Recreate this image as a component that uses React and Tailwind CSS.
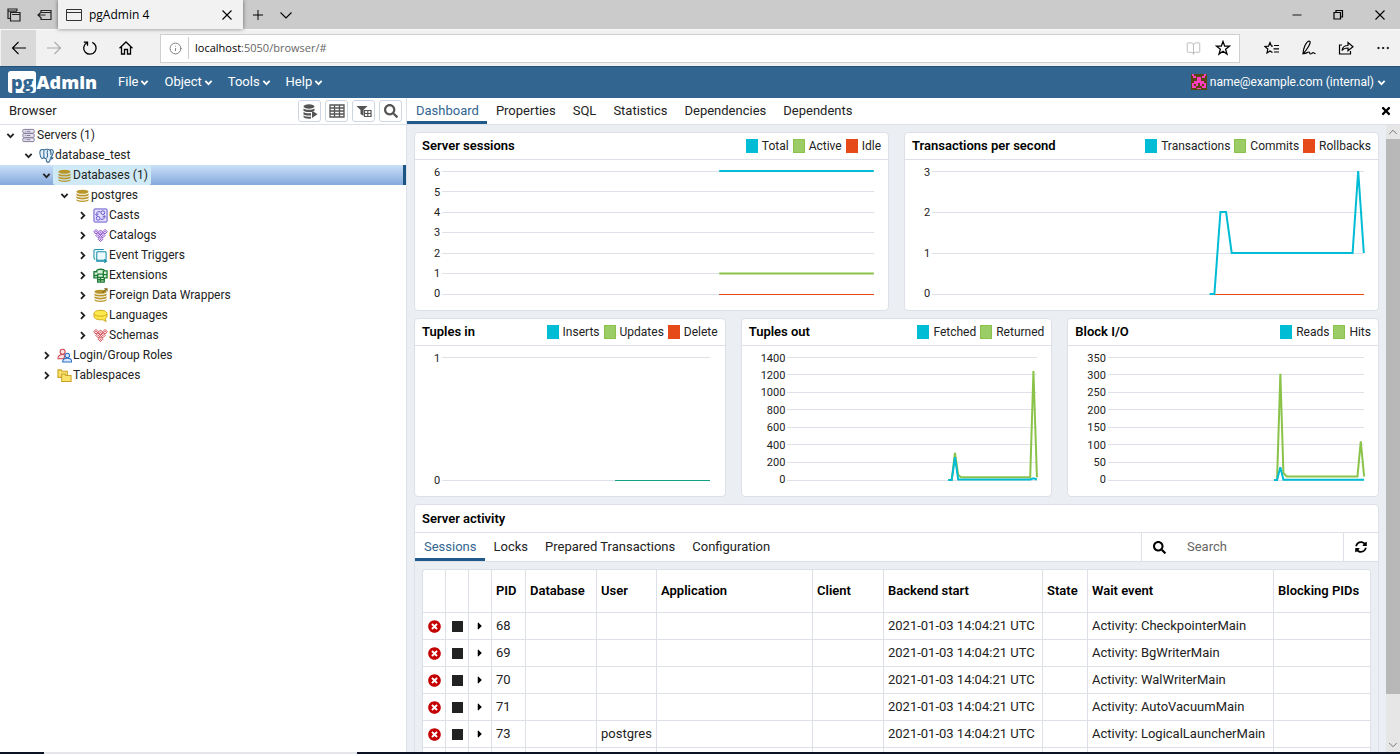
import { Info, BookOpen, Ellipsis, Plus, ChevronDown, ChevronUp, Minus } from 'lucide-react';
import { FaSearch, FaSyncAlt, FaTimes, FaTimesCircle, FaSquareFull, FaCaretRight } from 'react-icons/fa';

const BLUE = '#00bcd4';
const GREEN = '#8bc34a';
const RED = '#e64a19';

const treeRows = [
  { label: 'Servers (1)', depth: 0, icon: 'servers', open: true },
  { label: 'database_test', depth: 1, icon: 'elephant', open: true },
  { label: 'Databases (1)', depth: 2, icon: 'database', open: true, selected: true },
  { label: 'postgres', depth: 3, icon: 'database', open: true },
  { label: 'Casts', depth: 4, icon: 'casts' },
  { label: 'Catalogs', depth: 4, icon: 'catalogs' },
  { label: 'Event Triggers', depth: 4, icon: 'triggers' },
  { label: 'Extensions', depth: 4, icon: 'extensions' },
  { label: 'Foreign Data Wrappers', depth: 4, icon: 'fdw' },
  { label: 'Languages', depth: 4, icon: 'languages' },
  { label: 'Schemas', depth: 4, icon: 'schemas' },
  { label: 'Login/Group Roles', depth: 2, icon: 'roles' },
  { label: 'Tablespaces', depth: 2, icon: 'tablespaces' },
];

const indents = ['pl-[6px]', 'pl-[24px]', 'pl-[42px]', 'pl-[60px]', 'pl-[78px]'];

// x is a percentage of the plot width, y is the value
const charts = {
  sessions: {
    title: 'Server sessions',
    ticks: [6, 5, 4, 3, 2, 1, 0],
    legend: [['Total', BLUE], ['Active', GREEN], ['Idle', RED]],
    series: [
      { color: BLUE, width: 2, points: [[64.2, 6], [100, 6]] },
      { color: GREEN, width: 2, points: [[64.2, 1], [100, 1]] },
      { color: RED, width: 1, points: [[64.2, 0], [100, 0]] },
    ],
  },
  transactions: {
    title: 'Transactions per second',
    ticks: [3, 2, 1, 0],
    legend: [['Transactions', BLUE], ['Commits', GREEN], ['Rollbacks', RED]],
    series: [
      { color: RED, width: 1, points: [[64.3, 0], [100, 0]] },
      { color: BLUE, width: 2, points: [[64.3, 0], [65.4, 0], [66.8, 2], [68.1, 2], [69.4, 1], [97.4, 1], [98.7, 3], [100, 1]] },
    ],
  },
  tuplesIn: {
    title: 'Tuples in',
    ticks: [1, 0],
    legend: [['Inserts', BLUE], ['Updates', GREEN], ['Delete', RED]],
    series: [{ color: '#14a085', width: 1, points: [[64.3, 0], [100, 0]] }],
  },
  tuplesOut: {
    title: 'Tuples out',
    ticks: [1400, 1200, 1000, 800, 600, 400, 200, 0],
    legend: [['Fetched', BLUE], ['Returned', GREEN]],
    series: [
      { color: GREEN, width: 2, points: [[64.5, 0], [65.9, 0], [67.2, 310], [68.5, 55], [69.7, 30], [97.3, 30], [98.6, 1240], [100, 30]] },
      { color: BLUE, width: 2, points: [[64.5, 0], [65.9, 0], [67.2, 260], [68.5, 5], [97.3, 5], [98.6, 18], [100, 5]] },
    ],
  },
  blockIo: {
    title: 'Block I/O',
    ticks: [350, 300, 250, 200, 150, 100, 50, 0],
    legend: [['Reads', BLUE], ['Hits', GREEN]],
    series: [
      { color: GREEN, width: 2, points: [[64.8, 0], [66, 0], [67.3, 302], [68.5, 20], [69.8, 10], [97.4, 10], [98.7, 110], [100, 10]] },
      { color: BLUE, width: 2, points: [[64.8, 0], [66, 0], [67.3, 36], [68.5, 1], [100, 1]] },
    ],
  },
};

const columns = [
  { name: 'PID', width: 'w-[34px]' },
  { name: 'Database', width: 'w-[71px]' },
  { name: 'User', width: 'w-[60px]' },
  { name: 'Application', width: '' },
  { name: 'Client', width: 'w-[71px]' },
  { name: 'Backend start', width: 'w-[159px]' },
  { name: 'State', width: 'w-[45px]' },
  { name: 'Wait event', width: 'w-[186px]' },
  { name: 'Blocking PIDs', width: 'w-[97px]' },
];

const STARTED = '2021-01-03 14:04:21 UTC';

const sessions = [
  ['68', '', '', '', '', STARTED, '', 'Activity: CheckpointerMain', ''],
  ['69', '', '', '', '', STARTED, '', 'Activity: BgWriterMain', ''],
  ['70', '', '', '', '', STARTED, '', 'Activity: WalWriterMain', ''],
  ['71', '', '', '', '', STARTED, '', 'Activity: AutoVacuumMain', ''],
  ['73', '', 'postgres', '', '', STARTED, '', 'Activity: LogicalLauncherMain', ''],
  ['', '', '', '', '', '', '', '', ''],
];

function Caret({ open, className }) {
  return (
    <svg viewBox="0 0 10 10" className={className} fill="none" stroke="currentColor" strokeWidth="2">
      <path d={open ? 'M1.500 3.300 5 6.800 8.500 3.300' : 'M3.300 1.300 7 5 3.300 8.700'} />
    </svg>
  );
}

// thin 16px line icons of the browser window
function Line({ d, className = 'size-4', width = 1.1 }) {
  return (
    <svg viewBox="0 0 16 16" className={className} fill="none" stroke="currentColor" strokeWidth={width}>
      <path d={d} />
    </svg>
  );
}

function Diamonds({ color, fill }) {
  const spots = [[3.2, 4], [8, 4.6], [12.8, 4], [5.6, 8], [10.4, 8], [8, 12]];
  return (
    <g stroke={color} strokeWidth="1" fill={fill}>
      {spots.map(([x, y]) => (
        <path key={`${x}-${y}`} d={`M${x} ${y - 2.5}l2.500 2.500-2.500 2.500-2.500-2.500z`} />
      ))}
      {spots.map(([x, y]) => (
        <circle key={`${x}-${y}`} cx={x} cy={y} r="0.4" />
      ))}
    </g>
  );
}

function Discs({ color }) {
  return (
    <g fill={color}>
      <ellipse cx="8" cy="4" rx="6.500" ry="2.200" />
      <path d="M1.500 5.800c1.500 2 11.500 2 13 0v1.800c-1.500 2-11.500 2-13 0zM1.500 8.900c1.500 2 11.500 2 13 0v1.800c-1.500 2-11.500 2-13 0zM1.500 12c1.500 2 11.500 2 13 0v1c-1.500 2.400-11.500 2.400-13 0z" />
    </g>
  );
}

const treeIcons = {
  servers: (
    <g fill="#edeaf6" stroke="#7d7696" strokeWidth="1">
      <rect x="2" y="1.500" width="12" height="4" rx="1" />
      <rect x="2" y="6" width="12" height="4" rx="1" />
      <rect x="2" y="10.500" width="12" height="4" rx="1" />
      <path d="M4 3.500h1M6 3.500h4M4 8h1M6 8h4M4 12.500h1M6 12.500h4" />
    </g>
  ),
  elephant: (
    <g fill="#e3f0f8" stroke="#336791" strokeWidth="1.100" strokeLinejoin="round">
      <path d="M5.500 2C3 .8.700 2 .900 5c.2 2.500 1.400 6 2.700 6.200 1 .1 1.600-1.200 2-2" />
      <path d="M5.500 2c2-1 4-1 6 0 2.500-.9 4.200.5 3.700 3-.4 2-1.500 4-2.800 5.200.8.5 2 .3 2.600.1-.6 1.200-2 1.500-3 1.200-.1 1.500-.3 3.500-2 3.800-2.200.3-2.300-2-2.400-4-1.500 0-2.500-.8-2.300-2.500.1-2-.7-4.800.2-6.800z" />
      <path d="M9.500 2.600c-1 1-1 3-.5 4.400.5 1.200.2 2.300-.8 3.500M11.500 2c1.400 1.500 1.800 3.500 1 5.500" fill="none" />
    </g>
  ),
  database: <Discs color="#b8962a" />,
  casts: (
    <g fill="none" stroke="#5c4fc9" strokeWidth="1">
      <rect x="1" y="1" width="14" height="14" rx="1" fill="#e6e1fd" />
      <circle cx="10.500" cy="5" r="2" />
      <circle cx="5.500" cy="11" r="2" />
      <path d="M8 4H5.500C4 4 4 5 4 8M2.500 6.500 4 8l2-2M8 12h2.500c1.500 0 1.500-1.500 1.500-3.500M10 10l2-2 1.500 2" />
    </g>
  ),
  catalogs: <Diamonds color="#8a4fc9" fill="#f3eafd" />,
  triggers: (
    <g fill="#e9f9fc" stroke="#1d8fa8" strokeWidth="1.100">
      <path d="M11.500 1.500h-9c-1 0-1.500.5-1.500 1.500v7.500c0 1 .5 1.500 1.500 1.500" />
      <rect x="4" y="4" width="10" height="9" rx="1" />
      <path d="M4 12v2h10M12 12l2.500 2-2.500 1.800" fill="none" />
    </g>
  ),
  extensions: (
    <g fill="#d8f0dc" stroke="#1e7a33" strokeWidth="1.400">
      <path d="M4 3c0-2.200 8-2.200 8 0h3v7.500h-3V15H5v-4.500H1V4h3z" />
      <path d="M5 6.500h6v3.500H5zM11 3v7M1 8h4M8 10v5M11 7h4M5 12.500h7" fill="none" />
    </g>
  ),
  fdw: (
    <g>
      <Discs color="#b8962a" />
      <path d="M10 5 15 .8M12 .8h3v3" fill="none" stroke="#7d6217" strokeWidth="1.100" />
    </g>
  ),
  languages: (
    <g fill="#fde94a" stroke="#cfa51a" strokeWidth="1">
      <path d="M8 2.500c4.500 0 7 1.500 7 3.700v2.500c0 1.300-.8 2.300-2 3l1 2.800-3.500-2C5.500 13 1 11.600 1 8.700V6.200C1 4 3.500 2.500 8 2.500z" />
      <path d="M1.300 6.500c.7 3 12.700 3 13.400 0" fill="none" />
    </g>
  ),
  schemas: <Diamonds color="#cf3b45" fill="#fff" />,
  roles: (
    <g strokeWidth="1.100">
      <circle cx="6" cy="4" r="2.700" fill="#fbe4e6" stroke="#d0434d" />
      <path d="M1 11.500c0-3 2-4.500 5-4.500 1.500 0 2 .3 2.700 1L7 11.500z" fill="#fbe4e6" stroke="#d0434d" />
      <circle cx="11" cy="8" r="2.400" fill="#d8e8fb" stroke="#2a6cc0" />
      <path d="M6 15c0-2.700 2-4 5-4s4.800 1.300 4.800 4z" fill="#d8e8fb" stroke="#2a6cc0" />
    </g>
  ),
  tablespaces: (
    <g fill="#fbe26a" stroke="#c9a227" strokeWidth="1.100">
      <path d="M1 2h3.500l1 1.500H11V10H1z" />
      <path d="M5 6.500h3.500l1 1.500H15v6.500H5z" />
    </g>
  ),
};

function BrowserChrome() {
  return (
    <header className="shrink-0 font-['Open_Sans','Noto_Sans',sans-serif] text-xs text-black">
      <div className="flex h-[29px] items-stretch bg-[#cbcbcb]">
        <div className="flex w-[58px] items-center justify-center gap-4">
          <svg viewBox="0 0 14 14" className="size-[14px]" fill="none" stroke="#222" strokeWidth="1.2">
            <path d="M3 10.500H1V1h9v2M1 3.200h9M5 6.500h8" />
            <path d="M3.500 4.500H13V13H3.500z" />
          </svg>
          <svg viewBox="0 0 15 14" className="h-[14px] w-[15px]" fill="none" stroke="#222" strokeWidth="1.200">
            <path d="M4 5V2.500h10v9H4V9M4 4.500h10M1 7h7.500M3.500 4.800 1 7l2.500 2.200" />
          </svg>
        </div>
        <div className="flex w-[185px] items-center bg-[#f2f2f2] pr-2 pl-2 shadow-[0_0_4px_rgba(0,0,0,0.5)]">
          <svg viewBox="0 0 16 14" className="h-[14px] w-4" fill="none" stroke="#333" strokeWidth="1">
            <path d="M.5 1.500h15v11H.5zM.5 4.500h15" />
          </svg>
          <span className="ml-[7px] flex-1">pgAdmin 4</span>
          <button aria-label="Close tab"><Line d="M3.500 3.500l9 9M12.500 3.500l-9 9" /></button>
        </div>
        <button aria-label="New tab" className="ml-[7px]"><Plus className="size-4" strokeWidth={1.5} /></button>
        <button aria-label="Tab list" className="ml-3"><Line d="M2.500 5.500 8 11l5.500-5.500" /></button>
        <div className="ml-auto flex items-center gap-[26px] pr-3">
          <button aria-label="Minimize"><Minus className="size-[14px]" strokeWidth={1.5} /></button>
          <button aria-label="Restore"><Line d="M4 5.500h6.500V12H4zM6 5.500v-2h6.500V10h-2" width={1.2} /></button>
          <button aria-label="Close"><Line d="M3.500 3.500l9 9M12.500 3.500l-9 9" /></button>
        </div>
      </div>

      <div className="flex h-[37px] items-center border-t border-[#f8f8f8] bg-[#f1f1f1] pl-px">
        <button aria-label="Back" className="flex h-full w-[35px] items-center justify-center bg-[#d9d9d9]">
          <Line d="M15 8H1.500M7.500 2l-6 6 6 6" />
        </button>
        <button aria-label="Forward" className="flex w-9 items-center justify-center text-[#aaa]">
          <Line d="M1 8h13.500M8.500 2l6 6-6 6" />
        </button>
        <button aria-label="Refresh" className="flex w-9 items-center justify-center">
          <Line d="M10.300 2.300a6.200 6.200 0 1 1-5.600.4M1.800 2.200h3.700v3.600" width={1.3} />
        </button>
        <button aria-label="Home" className="flex w-9 items-center justify-center">
          <Line d="M1.500 8.200 8 2l6.500 6.200M3.500 6.500V14H6.500V9.500h3V14h3V6.500" width={1.3} />
        </button>
        <div className="ml-4 flex h-[29px] min-w-0 flex-1 items-center border border-[#cfcfcf] bg-white px-2">
          <Info className="size-[13px] text-[#666]" strokeWidth={1.5} />
          <span className="mx-[6px] h-[22px] w-px bg-[#ccc]" />
          <p className="flex-1 text-[11px]">localhost<span className="text-[#666]">:5050/browser/#</span></p>
          <BookOpen className="size-[15px] text-[#bbb]" strokeWidth={1.5} />
          <span className="ml-[14px]">
            <Line d="M8 1.500l1.700 4.700h4.800l-3.900 3 1.400 4.900L8 11.200l-4 2.900 1.400-4.900-3.900-3h4.800z" width={1.3} />
          </span>
        </div>
        <div className="flex items-center gap-[21px] pr-[9px] pl-6">
          <button aria-label="Favorites">
            <Line d="M9 6 7.500 6.200 6 2.500 4.500 6.200.800 6.500l3 2.500L3 13l3-2 2.500 1.600M10 5.500h5M9.500 8.800H15M10 12h5" width={1.2} />
          </button>
          <button aria-label="Notes">
            <Line d="M2 13.500c.3-5 3-12 6-12.500 2 0 1 3-.5 5.500S4 12 2 13.500zm0 0c3 .5 4.500-1.800 6-1.500 1.500.2 0 2 1.500 2 1.200 0 1.500-1.300 2.700-1.300 1 0 1 1 2.300 1" width={1.2} />
          </button>
          <button aria-label="Share">
            <Line d="M4 5H1.500v9h11v-3M4 10.500c.5-3.500 2.500-5 6-5V2.500l5 4.200-5 4.100V8C7.500 8 5.500 8.500 4 10.500z" width={1.2} />
          </button>
          <button aria-label="More"><Ellipsis className="size-4" strokeWidth={1.5} /></button>
        </div>
      </div>
    </header>
  );
}

function Avatar() {
  return (
    <svg viewBox="0 0 16 16" className="size-4">
      <path fill="#5c4410" d="M0 0h16v16H0z" />
      <path fill="#ff3fc0" d="M1 0h2v2H1zM2 2h3v2H2zM13 0h2v2h-2zM11 2h3v2h-3zM6 3h4v4h3v2h2v5h-4v-2H9v-1H7v1H5v2H1V9h2V7h3zM6 14h4v1H6z" />
      <path fill="#5c4410" d="M3 10h2v2H3zM11 10h2v2h-2zM7 9h2v2H7z" />
    </svg>
  );
}

function NavBar() {
  return (
    <nav className="flex h-8 shrink-0 items-center bg-[#326690] pr-[14px] pl-2 text-[13px] text-white shadow-[inset_0_1px_0_#245177]">
      <div className="flex items-center font-['Open_Sans',sans-serif] text-[18px] leading-[22px] font-extrabold">
        <span className="flex h-[22px] items-center rounded-[3px] bg-white px-[3px] text-[#326690]">pg</span>
        <span>Admin</span>
      </div>
      <div className="ml-[21px] flex gap-[15px]">
        {['File', 'Object', 'Tools', 'Help'].map((item) => (
          <button key={item} className="flex items-center gap-[2px]">
            {item}
            <Caret open className="size-[9px]" />
          </button>
        ))}
      </div>
      <button className="ml-auto flex items-center gap-[3px] text-xs">
        <Avatar />
        name@example.com (internal)
        <Caret open className="size-[9px]" />
      </button>
    </nav>
  );
}

function ToolButton({ label, children }) {
  return (
    <button aria-label={label} className="flex h-[22px] w-[23px] items-center justify-center rounded-[3px] border border-[#cfd6e2] text-[#555]">
      {children}
    </button>
  );
}

function Sidebar() {
  return (
    <aside className="flex w-[407px] shrink-0 flex-col border-r border-[#dde0e8]">
      <div className="flex h-[27px] shrink-0 items-center gap-1 border-b border-[#dde0e6] pr-[4px] pb-px pl-[9px]">
        <h1 className="mr-auto">Browser</h1>
        <ToolButton label="Query tool">
          <svg viewBox="0 0 16 16" className="size-4" fill="currentColor">
            <ellipse cx="7" cy="3.500" rx="5.500" ry="2.200" />
            <path d="M1.500 5.500c2 1.700 9 1.700 11 0v2.200c-2 1.700-9 1.700-11 0zM1.500 9c1.500 1.200 5 1.500 7.500 1v2.400c-3 .4-6 0-7.500-1zM1.500 12.500c1.500 1.200 5 1.400 7.500 1v2c-3 .4-6.500.2-7.500-1.500zM10 7.500l5.500 3.700-5.500 3.800z" />
          </svg>
        </ToolButton>
        <ToolButton label="View data">
          <svg viewBox="0 0 16 14" className="h-[14px] w-4" fill="none" stroke="currentColor" strokeWidth="1.300">
            <path d="M1 1h14v12H1zM1 4h14M1 7h14M1 10h14M5.500 1v12M10.500 1v12" />
          </svg>
        </ToolButton>
        <ToolButton label="Filtered rows">
          <svg viewBox="0 0 16 14" className="h-[14px] w-4" fill="none" stroke="currentColor" strokeWidth="1.200">
            <path d="M.5 2h11L7.500 6v6l-3-2V6z" fill="currentColor" stroke="none" />
            <path d="M8.500 6.500H15v6H8.500zM8.500 9.500H15M11.800 6.500v6" fill="#fff" />
          </svg>
        </ToolButton>
        <ToolButton label="Search objects"><FaSearch className="size-[14px]" /></ToolButton>
      </div>
      <ul className="text-xs">
        {treeRows.map((row) => (
          <li
            key={row.label}
            className={`flex h-5 items-center ${indents[row.depth]} ${row.selected ? 'border-r-3 border-[#1c5583] bg-linear-to-b from-[#cbe0f8] to-[#85a9dc]' : ''}`}
          >
            <Caret open={row.open} className="size-[9px]" />
            <span className={`ml-[2px] flex h-5 items-center gap-px rounded-[2px] pr-[3px] pl-1 ${row.selected ? 'bg-[#cfeaf6]' : ''}`}>
              <svg viewBox="0 0 16 16" className="size-[15px]">{treeIcons[row.icon]}</svg>
              {row.label}
            </span>
          </li>
        ))}
      </ul>
    </aside>
  );
}

function Tabs({ items }) {
  return items.map((item, i) => (
    <button
      key={item}
      className={`h-full border-b-3 pt-[2px] pr-2 pl-[9px] ${i === 0 ? 'border-[#1f5a8a] text-[#326690]' : 'border-transparent'}`}
    >
      {item}
    </button>
  ));
}

function ChartCard({ chart }) {
  const max = chart.ticks[0];
  const toY = (v) => ((max - v) / max) * 100;

  return (
    <section className="min-w-0 rounded-[4px] border border-[#dde0e6] bg-white">
      <div className="flex h-[27px] items-center border-b border-[#dde0e6] px-[7px]">
        <h2 className="mr-auto font-semibold text-black">{chart.title}</h2>
        <ul className="flex gap-1 text-xs">
          {chart.legend.map(([name, color]) => (
            <li key={name} className="flex items-center gap-1">
              <span
                className="h-[14px] w-3 border"
                style={{ background: color === GREEN ? '#9ccc65' : color, borderColor: color }}
              />
              {name}
            </li>
          ))}
        </ul>
      </div>
      <div className="flex gap-[2px] pt-[11px] pr-[14px] pb-[15px] pl-[19px]">
        <div className="flex h-[124px] flex-col justify-between pt-px text-right text-[11px]">
          {chart.ticks.map((tick) => (
            <span key={tick} className="flex h-px items-center justify-end">{tick}</span>
          ))}
        </div>
        <svg viewBox="0 0 100 100" preserveAspectRatio="none" className="h-[123px] min-w-0 flex-1 overflow-visible" fill="none">
          {chart.ticks.map((tick) => (
            <path key={tick} d={`M0 ${toY(tick)}H100`} stroke="#dfe1e8" strokeWidth="1" vectorEffect="non-scaling-stroke" shapeRendering="crispEdges" />
          ))}
          {chart.series.map((s, i) => (
            <polyline
              key={i}
              points={s.points.map(([x, v]) => `${x},${toY(v)}`).join(' ')}
              stroke={s.color}
              strokeWidth={s.width}
              vectorEffect="non-scaling-stroke"
              shapeRendering={s.width === 1 ? 'crispEdges' : 'auto'}
            />
          ))}
        </svg>
      </div>
    </section>
  );
}

function ServerActivity() {
  const cell = 'border-r border-b border-[#dde0e6]';
  return (
    <section className="rounded-[4px] border border-[#dde0e6]">
      <h2 className="flex h-7 items-center rounded-t-[4px] border-b border-[#dde0e6] bg-white px-[7px] font-semibold text-black">Server activity</h2>
      <div className="flex h-[29px] border-b border-[#dde0e6] bg-white">
        <Tabs items={['Sessions', 'Locks', 'Prepared Transactions', 'Configuration']} />
        <label className="ml-auto flex w-[203px] items-center border-x border-[#dde0e6] pl-[11px] text-black">
          <FaSearch className="size-[13px]" />
          <input aria-label="Search" placeholder="Search" className="ml-[21px] w-[130px] outline-none placeholder:text-[#666]" />
        </label>
        <button aria-label="Refresh" className="flex w-[34px] items-center justify-center text-black"><FaSyncAlt className="size-3" /></button>
      </div>
      <div className="p-[7px]">
        <div className="overflow-hidden rounded-t-[4px] border-t border-l border-[#dde0e6] bg-white">
          <table className="w-full table-fixed border-separate border-spacing-0 text-left">
            <thead>
              <tr className="h-[43px] text-black">
                <th className={`w-[23px] ${cell}`} />
                <th className={`w-[23px] ${cell}`} />
                <th className={`w-[23px] ${cell}`} />
                {columns.map((col) => (
                  <th key={col.name} className={`px-1 font-semibold whitespace-nowrap ${col.width} ${cell}`}>{col.name}</th>
                ))}
              </tr>
            </thead>
            <tbody>
              {sessions.map((row, i) => (
                <tr key={i} className="h-[27px]">
                  <td className={cell}>
                    {row[0] && <button aria-label="Terminate session" className="mx-auto block text-[#c40000]"><FaTimesCircle className="size-[13px]" /></button>}
                  </td>
                  <td className={cell}>
                    {row[0] && <button aria-label="Cancel query" className="mx-auto block"><FaSquareFull className="size-[11px]" /></button>}
                  </td>
                  <td className={cell}>
                    {row[0] && <button aria-label="Show details" className="mx-auto block text-black"><FaCaretRight className="size-3" /></button>}
                  </td>
                  {row.map((value, j) => (
                    <td key={j} className={`px-1 whitespace-nowrap ${cell}`}>{value}</td>
                  ))}
                </tr>
              ))}
            </tbody>
          </table>
        </div>
      </div>
    </section>
  );
}

export default function App() {
  return (
    <div className="flex h-screen flex-col overflow-hidden bg-white font-[Roboto,sans-serif] text-[13px] leading-4 text-[#222]">
      <BrowserChrome />
      <NavBar />
      <div className="flex min-h-0 flex-1">
        <Sidebar />
        <main className="flex min-w-0 flex-1 flex-col">
          <div className="flex h-[27px] shrink-0 border-b border-[#dde0e6]">
            <Tabs items={['Dashboard', 'Properties', 'SQL', 'Statistics', 'Dependencies', 'Dependents']} />
            <button aria-label="Close panel" className="mr-2 ml-auto text-black"><FaTimes className="size-3" /></button>
          </div>
          <div className="flex min-h-0 flex-1">
            <div className="flex min-w-0 flex-1 flex-col gap-[7px] overflow-hidden bg-[#ebeef3] p-[7px]">
              <div className="grid shrink-0 grid-cols-2 gap-[15px]">
                <ChartCard chart={charts.sessions} />
                <ChartCard chart={charts.transactions} />
              </div>
              <div className="grid shrink-0 grid-cols-3 gap-[15px]">
                <ChartCard chart={charts.tuplesIn} />
                <ChartCard chart={charts.tuplesOut} />
                <ChartCard chart={charts.blockIo} />
              </div>
              <ServerActivity />
            </div>
            <div className="flex w-[14px] shrink-0 flex-col items-center bg-[#e6e6e6] text-[#666]">
              <ChevronUp className="size-[14px] shrink-0" strokeWidth={1.5} />
              <div className="w-full flex-[555] bg-[#b8b8b8]" />
              <div className="flex-[44]" />
              <ChevronDown className="size-[14px] shrink-0" strokeWidth={1.5} />
            </div>
          </div>
        </main>
      </div>
      <footer className="flex h-[2px] shrink-0 bg-[#0b1226]">
        <div className="ml-11 w-[313px] bg-[#e4e6ea]" />
      </footer>
    </div>
  );
}
